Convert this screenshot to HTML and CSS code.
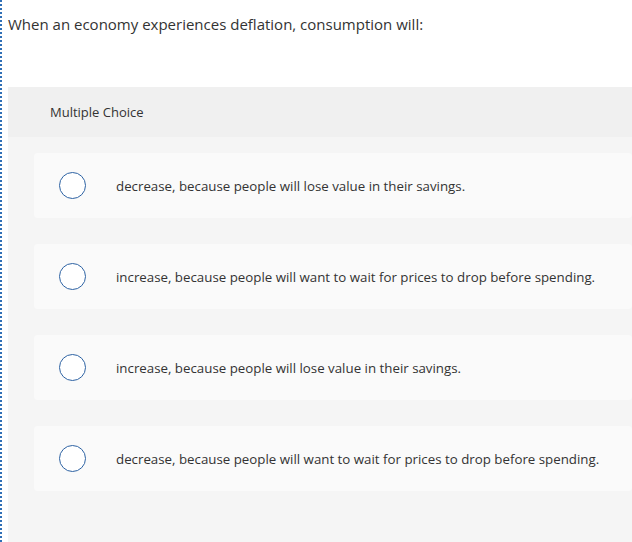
FILE: index.html
```html
<!DOCTYPE html>
<html>
<head>
<meta charset="utf-8">
<link rel="stylesheet" href="styles.css">
</head>
<body>
<div class="page">
  <p class="question">When an economy experiences deflation, consumption will:</p>
  <div class="panel">
    <div class="panel-head">Multiple Choice</div>
    <div class="panel-body">
      <div class="option"><span class="radio"></span><span class="label">decrease, because people will lose value in their savings.</span></div>
      <div class="option"><span class="radio"></span><span class="label">increase, because people will want to wait for prices to drop before spending.</span></div>
      <div class="option"><span class="radio"></span><span class="label">increase, because people will lose value in their savings.</span></div>
      <div class="option"><span class="radio"></span><span class="label">decrease, because people will want to wait for prices to drop before spending.</span></div>
    </div>
  </div>
</div>
</body>
</html>
```
FILE: styles.css
```css
html, body {
  margin: 0;
  padding: 0;
  background: #ffffff;
}
body {
  font-family: "Open Sans", "Liberation Sans", sans-serif;
  color: #333333;
  overflow: hidden;
}
.page {
  border-left: 2px dotted #2f6fb6;
  padding-left: 6px;
  height: 542px;
  box-sizing: border-box;
  display: flex;
  flex-direction: column;
}
.question {
  margin: 0;
  padding-top: 13px;
  height: 87px;
  flex: none;
  box-sizing: border-box;
  font-size: 15px;
  line-height: 22px;
  color: #333333;
}
.panel {
  background: #f5f5f5;
  flex: 1;
}
.panel-head {
  background: #f0f0f0;
  height: 50px;
  display: flex;
  align-items: center;
  padding-left: 42px;
  font-size: 13px;
  color: #333333;
}
.panel-body {
  padding: 16px 0 0 26px;
  display: flex;
  flex-direction: column;
  gap: 26px;
}
.option {
  background: #fafafa;
  border-radius: 4px;
  height: 65px;
  display: flex;
  align-items: center;
  padding-left: 25px;
}
.radio {
  width: 25px;
  height: 25px;
  border: 1.5px solid #2d62a3;
  border-radius: 50%;
  background: #ffffff;
  flex: none;
}
.label {
  margin-left: 30px;
  font-size: 13.3px;
  color: #333333;
}
```
